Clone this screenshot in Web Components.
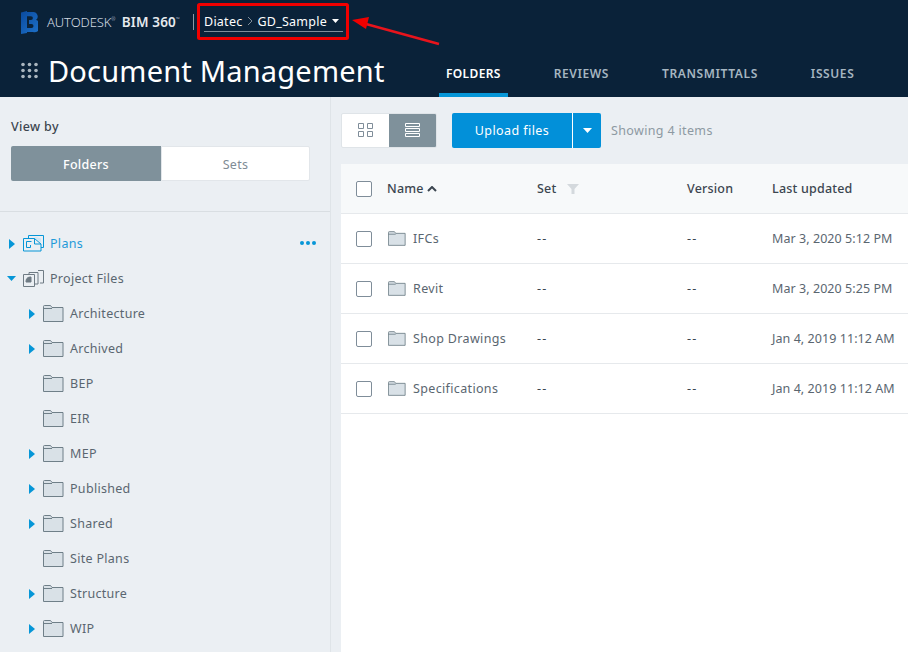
<!DOCTYPE html>
<html><head><meta charset="utf-8"><style>
html,body{margin:0;height:100%;overflow:hidden}
body{font-family:"Noto Sans",sans-serif;background:#ebeff3;position:relative;width:908px;height:652px}
app-body{display:flex;height:555px}
</style></head><body>
<app-header></app-header>
<app-body><side-panel></side-panel><main-panel></main-panel></app-body>
<call-out></call-out>
<script>
const el=(name,html)=>customElements.define(name,class extends HTMLElement{connectedCallback(){if(this.shadowRoot)return;const s=this.attachShadow({mode:'open'});s.innerHTML=typeof html==='function'?html(this):html;}});
const folder=`<svg width="21" height="17" viewBox="0 0 21 17" style="flex:none"><path d="M.5 16.5V1.5a1 1 0 0 1 1-1h6l1.5 2h11v14z" fill="#d9e1e7" stroke="#6f7f88"/><path d="M.5 3.5h8.5" stroke="#6f7f88" fill="none"/></svg>`;
const tri=(c='#0696d7')=>`<svg width="6" height="10" viewBox="0 0 6 10"><path d="M0 0 6 5 0 10z" fill="${c}"/></svg>`;
el('app-header',`<style>
:host{display:block;height:97px;background:#0a2239;color:#fff;box-sizing:border-box;padding:0 0 0 21px}
.top{display:flex;align-items:center;height:44px}
.brand{flex:none;font-size:13px;font-weight:300;color:#d5dce2;margin-left:9px;letter-spacing:-.1px;white-space:nowrap;width:133px}
.brand b{font-weight:600;margin-left:3px;letter-spacing:.15px;font-size:13.5px;color:#e6eaee}
.brand sup{font-size:5px;vertical-align:6px;letter-spacing:0}
.sep{flex:none;width:1px;height:16px;background:#8d9aa5;margin:0 10px 0 13px}
.crumb{display:flex;align-items:center;align-self:flex-start;margin-top:11px;font-size:12.5px;letter-spacing:.25px;height:21px;border-bottom:1px solid #7f8d99;width:139px;box-sizing:border-box;white-space:nowrap}
.crumb svg{margin:0 4.500px}
.bottom{display:flex;height:53px}
.title{display:flex;align-items:center;gap:10px;width:418px;font-size:29px;line-height:1;height:53px;letter-spacing:.2px;font-weight:400;white-space:nowrap;box-sizing:border-box}
nav{display:flex}
nav a{display:flex;align-items:center;justify-content:center;height:39px;padding:10px 7px 0;margin-right:39px;font-size:12px;font-weight:600;color:#a6b6c1;letter-spacing:.6px;border-bottom:4px solid transparent;box-sizing:content-box}
nav a.on{color:#fff;border-color:#0696d7;margin-right:39px;letter-spacing:.35px}
</style>
<div class="top">
<svg width="17" height="23" viewBox="0 0 17 23" style="flex:none"><defs><linearGradient id="g" x1="0" x2="1" y1="0" y2="1"><stop offset="0" stop-color="#0a4a9e"/><stop offset="1" stop-color="#1f74cc"/></linearGradient></defs><path d="M0 1.500 6 0v22l-6 1zM6 1h6a4.500 4.500 0 0 1 3 8A5.600 5.600 0 0 1 12 21H6v-4h4.500a2 2 0 0 0 0-4H8V9h2a1.900 1.900 0 0 0 0-3.800H6z" fill="url(#g)" fill-rule="evenodd"/></svg>
<span class="brand">AUTODESK<sup>®</sup> <b>BIM 360</b><sup>™</sup></span>
<span class="sep"></span>
<span class="crumb">Diatec<svg width="6" height="10" viewBox="0 0 6 10"><path d="M1 1l4 4-4 4" fill="none" stroke="#7f8d99"/></svg>GD_Sample<svg width="7" height="4" viewBox="0 0 7 4" style="margin:0 0 0 5px"><path d="M0 0h7L3.500 4z" fill="#fff"/></svg></span>
</div>
<div class="bottom">
<div class="title"><svg width="17" height="17" viewBox="0 0 17 17" fill="#aab6bf"><circle cx="2" cy="2.500" r="1.800"/><circle cx="8.500" cy="2.500" r="1.800"/><circle cx="15" cy="2.500" r="1.800"/><circle cx="2" cy="8.500" r="1.800"/><circle cx="8.500" cy="8.500" r="1.800"/><circle cx="15" cy="8.500" r="1.800"/><circle cx="2" cy="14.500" r="1.800"/><circle cx="8.500" cy="14.500" r="1.800"/><circle cx="15" cy="14.500" r="1.800"/></svg><span>Document Management</span></div>
<nav><a class="on">FOLDERS</a><a>REVIEWS</a><a>TRANSMITTALS</a><a>ISSUES</a></nav>
</div>`);
el('tree-row',h=>{
 const d=+h.getAttribute('depth')||0,t=h.getAttribute('toggle');
 return `<style>:host{display:flex;align-items:center;height:35px;font-size:12.5px;color:#5a6670;letter-spacing:.3px;position:relative}
 .t{width:${d?43:23}px;padding-left:${d?29:9}px;box-sizing:border-box;display:flex;align-items:center;flex:none}
 .i{display:flex;margin-right:6px}</style>
 <span class="t">${t==='r'?tri():t==='d'?`<svg width="9" height="5" viewBox="0 0 9 5" style="margin-left:-2px"><path d="M0 0h9L4.500 5z" fill="#0696d7"/></svg>`:''}</span>
 <span class="i"><slot name="icon">${folder}</slot></span><slot></slot>`});
el('side-panel',`<style>
:host{display:block;width:331px;flex:none;box-sizing:border-box;border-right:1px solid #dfe4e8;overflow:hidden}
.head{padding:22px 20px 0 11px;height:115px;box-sizing:border-box;border-bottom:1px solid #d9dee2}
.label{font-size:12.5px;color:#3c4650;height:16px;line-height:16px;letter-spacing:.35px;font-weight:500}
.seg{display:flex;margin-top:11px;height:35px;width:299px;font-size:12.5px;letter-spacing:.3px}
.seg span{display:flex;align-items:center;justify-content:center;box-sizing:border-box;padding-top:1px}
.a{width:150px;background:#7f919b;color:#fff;border-radius:2px 0 0 2px;font-weight:500}
.b{width:149px;background:#fff;color:#808c95;border:1px solid #e2e6ea;border-radius:0 2px 2px 0}
.tree{padding-top:14px;position:relative}
.more{position:absolute;right:14px;top:29px;display:flex;gap:2px}
.more i{width:4px;height:4px;border-radius:50%;background:#0696d7}
.blue{color:#1f9ad9}
</style>
<div class="head"><div class="label">View by</div><div class="seg"><span class="a">Folders</span><span class="b">Sets</span></div></div>
<div class="tree">
<tree-row toggle="r"><svg slot="icon" width="21" height="17" viewBox="0 0 21 17" fill="none" stroke="#0696d7"><path d="M11 1.500 18 8V3.500z" fill="#cfe6f4" stroke="none"/><path d="M.5 3.500h11L18 9v7H.5z"/><path d="M5.500 3V.5h15v12H18"/><path d="M11.500 3.500V9H18" stroke="#0696d7"/><path d="M8.500 6.500h-5v6h4V10" stroke="#0696d7"/></svg><span class="blue">Plans</span></tree-row>
<span class="more"><i></i><i></i><i></i></span>
<tree-row toggle="d"><svg slot="icon" width="21" height="17" viewBox="0 0 21 17" fill="none" stroke="#6f7b84"><path d="M.5 4.500h11v12H.5z"/><path d="M6 4V2.500h9V14h-3M15 .5h5.500V13H17"/><path d="M3 12c0-3 1-5 5-5v5z" fill="#6f7b84"/></svg>Project Files</tree-row>
<tree-row depth="1" toggle="r">Architecture</tree-row>
<tree-row depth="1" toggle="r">Archived</tree-row>
<tree-row depth="1">BEP</tree-row>
<tree-row depth="1">EIR</tree-row>
<tree-row depth="1" toggle="r">MEP</tree-row>
<tree-row depth="1" toggle="r">Published</tree-row>
<tree-row depth="1" toggle="r">Shared</tree-row>
<tree-row depth="1">Site Plans</tree-row>
<tree-row depth="1" toggle="r">Structure</tree-row>
<tree-row depth="1" toggle="r">WIP</tree-row>
</div>`);
el('file-row',h=>`<style>
:host{display:grid;grid-template-columns:46px 150px 150px 85px 1fr;align-items:center;height:50px;box-sizing:border-box;border-bottom:1px solid #e6e9ec;background:#fff;font-size:12.5px;color:#5a6670;letter-spacing:.35px;white-space:nowrap}
i{width:16px;height:16px;box-sizing:border-box;border:1px solid #7f8d99;border-radius:2px;background:#fff;margin-left:15px;display:block}
.n{display:flex;align-items:center;gap:7px}
.n svg{width:18px;height:15px;margin-left:1px}
.d{color:#3c4650;letter-spacing:1.1px}
.t{letter-spacing:.06px}
</style><i></i><span class="n">${folder}${h.getAttribute('name')}</span><span class="d">--</span><span class="d">--</span><span class="t">${h.getAttribute('date')}</span>`);
el('main-panel',`<style>
:host{display:block;flex:1;margin-left:10px;min-width:0}
.bar{display:flex;align-items:center;height:67px;padding-bottom:1px;box-sizing:border-box}
.view{display:flex;width:96px;height:35px;box-sizing:border-box;border:1px solid #dfe4e8;border-radius:2px;background:#fff;overflow:hidden}
.view span{flex:1;display:flex;align-items:center;justify-content:center}
.view .on{background:#7f919b;flex:0 0 47px}
.up{display:flex;height:35px;margin-left:15px;border-radius:2px;color:#fff;font-size:12.5px;letter-spacing:.42px;background:#0290d9}
.up b{font-weight:400;width:120px;display:flex;align-items:center;justify-content:center;border-right:1px solid #fff;box-sizing:content-box}
.up span{width:28px;display:flex;align-items:center;justify-content:center}
.count{margin-left:10px;font-size:12.5px;color:#8d99a2;letter-spacing:.35px}
.table{background:#fff;height:488px}
.th{display:grid;grid-template-columns:46px 150px 150px 85px 1fr;align-items:center;height:50px;box-sizing:border-box;background:#f7f9fa;border-bottom:1px solid #e6e9ec;font-size:12.5px;font-weight:500;color:#3c4650;letter-spacing:.2px;white-space:nowrap}
.th i{width:16px;height:16px;box-sizing:border-box;border:1px solid #7f8d99;border-radius:2px;background:#fff;margin-left:15px;display:block}
.th span{display:flex;align-items:center;gap:3px}
</style>
<div class="bar">
<div class="view"><span><svg width="15" height="14" viewBox="0 0 15 14" fill="none" stroke="#7f8d99"><path d="M.5.500h5v5h-5zM9.500.500h5v5h-5zM.5 8.500h5v5h-5zM9.500 8.500h5v5h-5z"/></svg></span><span class="on"><svg width="15" height="14" viewBox="0 0 15 14" fill="none" stroke="#fff"><path d="M.5.500h14v3H.5zM.5 5.500h14v3H.5zM.5 10.500h14v3H.5z"/></svg></span></div>
<div class="up"><b>Upload files</b><span><svg width="9" height="5" viewBox="0 0 9 5"><path d="M0 0h9L4.500 5z" fill="#fff"/></svg></span></div>
<span class="count">Showing 4 items</span>
</div>
<div class="table">
<div class="th"><i></i><span>Name<svg width="10" height="6" viewBox="0 0 10 6"><path d="M1 5l4-4 4 4" fill="none" stroke="#3c4650" stroke-width="2"/></svg></span><span>Set<svg width="12" height="10" viewBox="0 0 12 10" style="margin-left:8px"><path d="M0 0h12L7.500 5v5h-3V5z" fill="#d4d9dd"/></svg></span><span>Version</span><span>Last updated</span></div>
<file-row name="IFCs" date="Mar 3, 2020 5:12 PM"></file-row>
<file-row name="Revit" date="Mar 3, 2020 5:25 PM"></file-row>
<file-row name="Shop Drawings" date="Jan 4, 2019 11:12 AM"></file-row>
<file-row name="Specifications" date="Jan 4, 2019 11:12 AM"></file-row>
</div>`);
el('call-out',`<style>:host{position:absolute;left:0;top:0;width:908px;height:60px;pointer-events:none}
svg{position:absolute;left:0;top:0}</style>
<svg width="908" height="60" fill="none"><rect x="198.500" y="4.500" width="149" height="34" rx="1" stroke="#f00000" stroke-width="3"/><path d="M439 44 366 24" stroke="#e8141c" stroke-width="2.500"/><path d="M352 20 369 17 366 29z" fill="#f00000"/></svg>`);
</script></body></html>
